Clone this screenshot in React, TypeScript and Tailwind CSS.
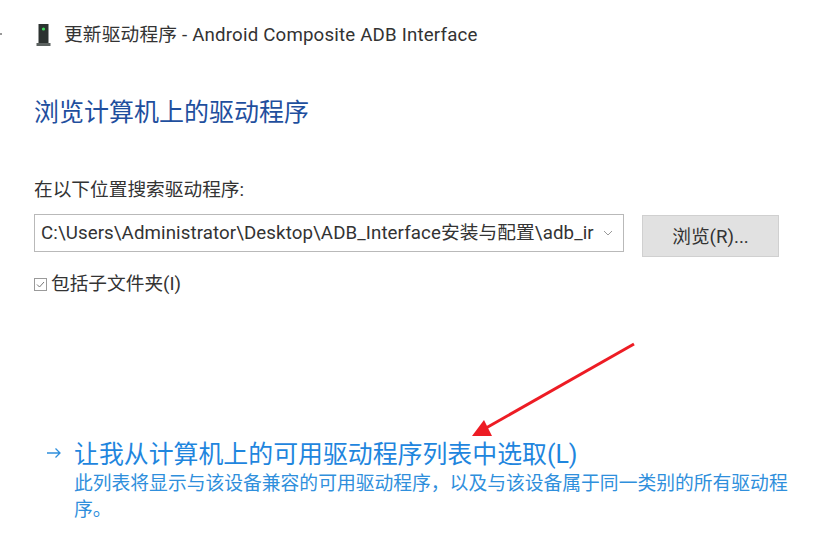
export default function App() {
  return (
    <div className="relative w-[831px] h-[556px] overflow-hidden bg-white font-['Roboto','Noto_Sans_CJK_SC',sans-serif]">
      <div className="flex flex-col pl-[34px]">
        <div className="flex items-center h-[26px] mt-[22px] gap-[14px] pl-[2px] text-[18.7px] tracking-[0.18px] text-[#333] whitespace-nowrap">
          <svg width="15" height="24" viewBox="0 0 15 24" className="shrink-0">
            <path d="M2.500 1h10v19h-10z" fill="#2c3230" />
            <rect x="0.500" y="20" width="14" height="3" fill="#5c6260" />
            <circle cx="7.500" cy="6" r="1.600" fill="#3ddc5a" />
          </svg>
          <span className="-ml-[1px]">更新驱动程序 - Android Composite ADB Interface</span>
        </div>
        <h1 className="mt-[47px] h-[36px] leading-[36px] text-[25px] font-normal text-[#1f4f9e]">浏览计算机上的驱动程序</h1>
        <div className="mt-[46px] h-[26px] leading-[26px] text-[18.7px] text-[#333]">在以下位置搜索驱动程序:</div>
        <div className="flex items-start mt-[11px] gap-[18px]">
          <div className="flex items-center w-[590px] h-[38px] border border-[#b9b9b9] pl-[6px] pr-[10px] text-[18.7px] tracking-[0.1px] text-[#333] whitespace-nowrap">
            <span className="flex-1 overflow-hidden">C:\Users\Administrator\Desktop\ADB_Interface安装与配置\adb_ir</span>
            <svg width="10" height="6" viewBox="0 0 10 6" className="ml-[6px] shrink-0">
              <path d="M1 1l4 4 4-4" fill="none" stroke="#9a9a9a" strokeWidth="1" />
            </svg>
          </div>
          <button className="w-[137px] h-[42px] mt-[1px] pt-[2px] bg-[#e1e1e1] border border-[#d0d0d0] text-[18.7px] text-[#333]">浏览(R)...</button>
        </div>
        <label className="flex items-center mt-[14px] h-[26px] gap-[4px] text-[18.7px] text-[#333]">
          <span className="flex items-center justify-center w-[13px] h-[13px] border border-[#9a9a9a]">
            <svg width="11" height="11" viewBox="0 0 11 11">
              <path d="M2 5.500l2.500 2.500 4.500-5" fill="none" stroke="#777" strokeWidth="1" />
            </svg>
          </span>
          <span>包括子文件夹(I)</span>
        </label>
        <div className="flex mt-[140px]">
          <span className="w-[41px] h-[36px]">
            <svg width="18" height="36" viewBox="0 0 18 36" className="ml-[11px]">
              <path d="M2 16h13M10.500 11.500L15 16l-4.500 4.500" fill="none" stroke="#2f8fdc" strokeWidth="1.300" />
            </svg>
          </span>
          <div className="w-[716px] -ml-[1px]">
            <div className="h-[36px] leading-[36px] text-[24.9px] text-[#1f86de] whitespace-nowrap">让我从计算机上的可用驱动程序列表中选取(L)</div>
            <p className="-mt-[2px] text-[18.8px] leading-[26px] text-[#2f8fdc]">此列表将显示与该设备兼容的可用驱动程序，以及与该设备属于同一类别的所有驱动程序。</p>
          </div>
        </div>
      </div>
      <svg className="absolute left-[465px] top-[338px]" width="175" height="102" viewBox="0 0 175 102">
        <path d="M169 6L21 90" stroke="#ed1c24" strokeWidth="3" />
        <path d="M7 98L19 82L27 98Z" fill="#ed1c24" />
      </svg>
      <div className="absolute left-0 top-[33px] w-[2px] h-[2px] bg-[#999]" />
    </div>
  );
}
